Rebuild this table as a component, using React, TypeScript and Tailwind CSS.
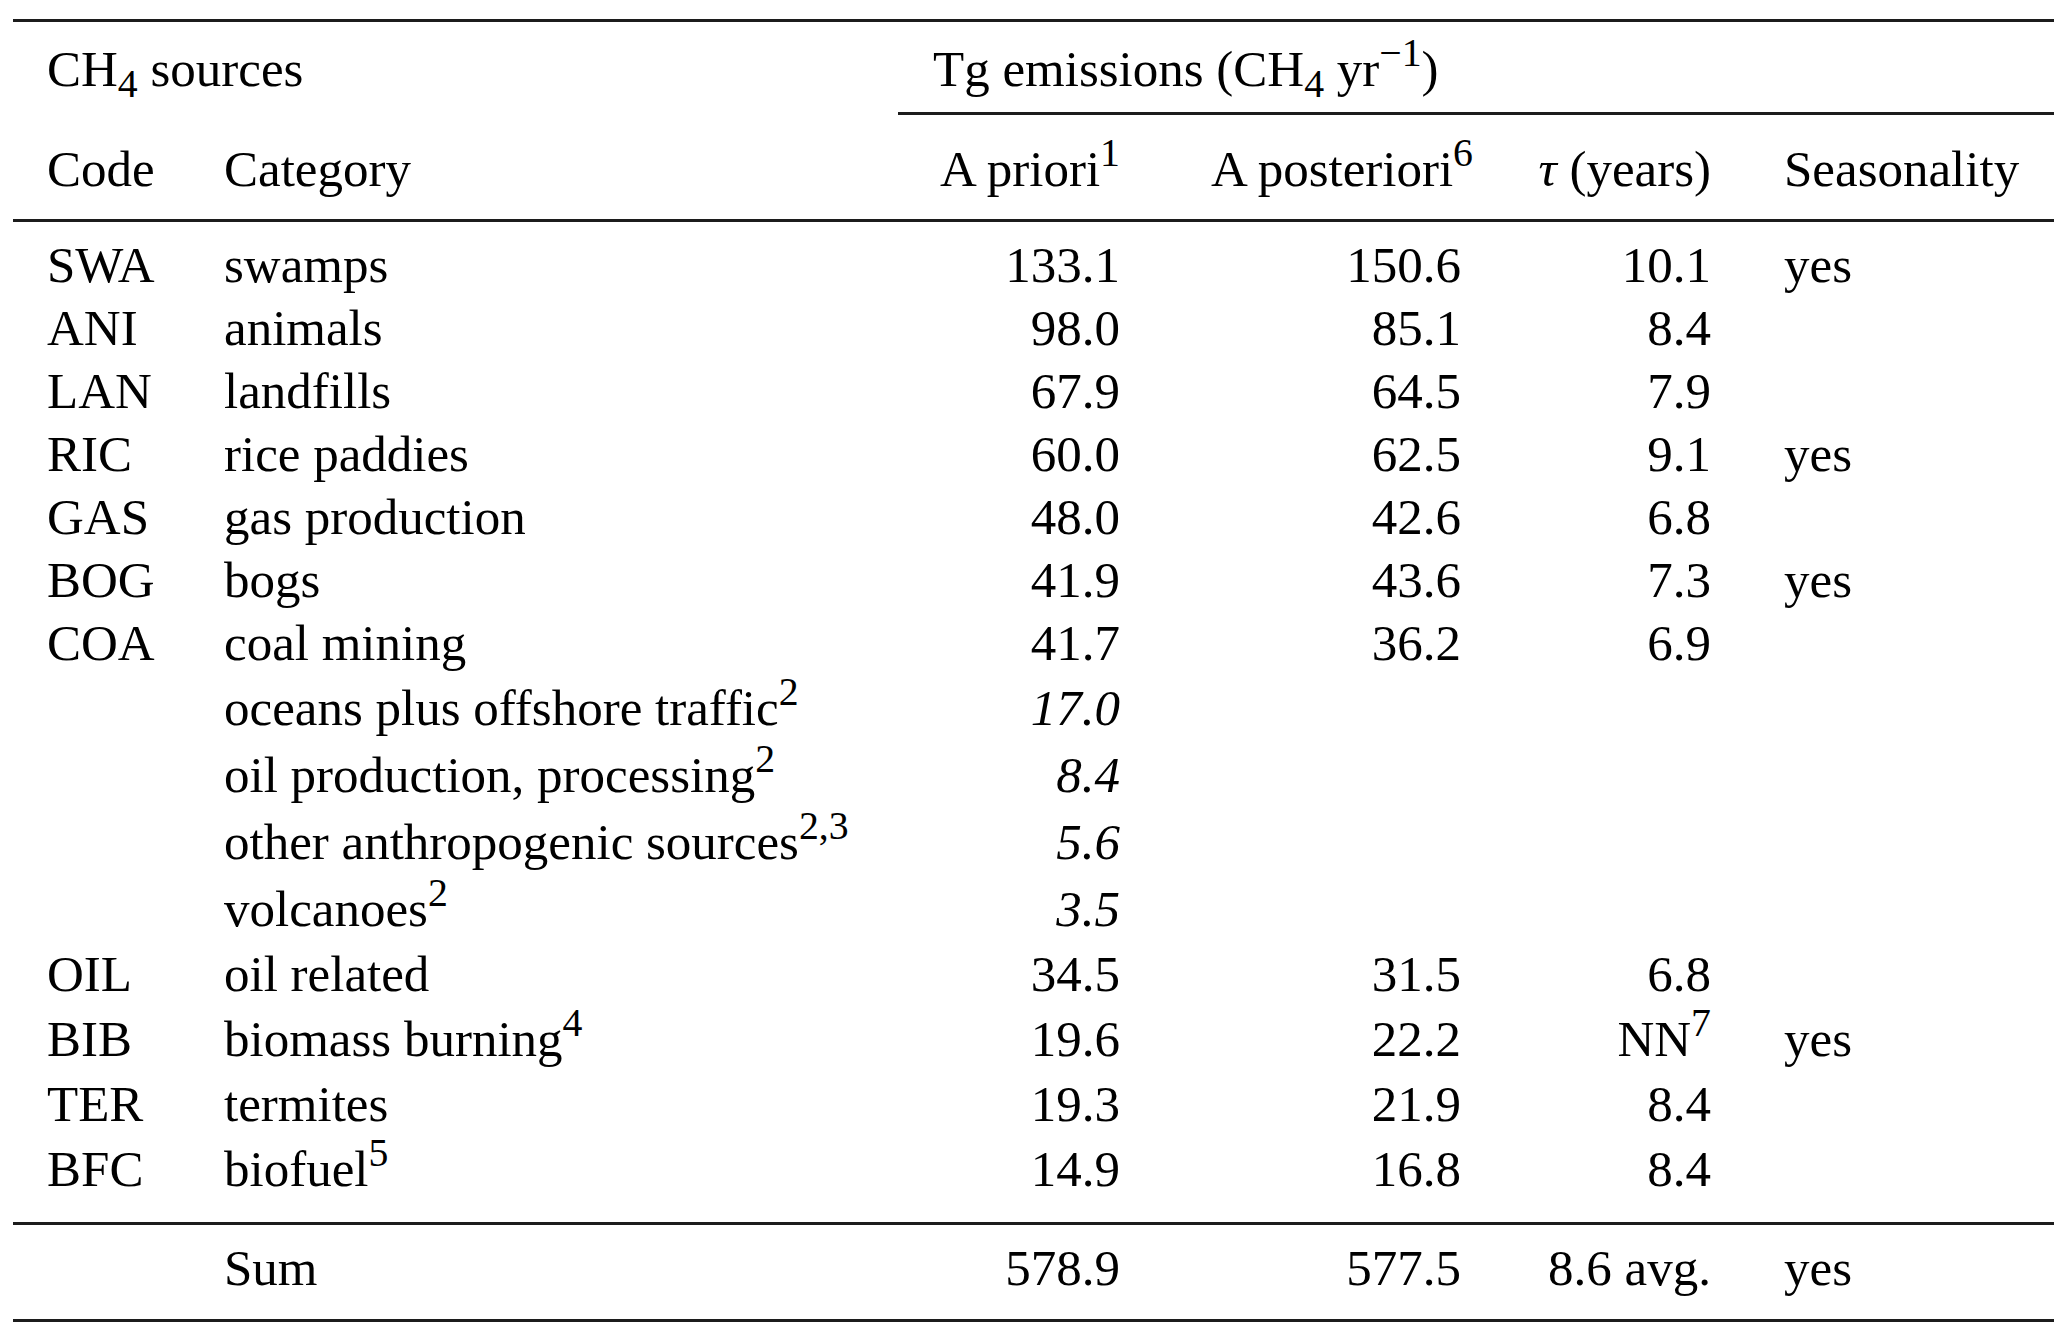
import React from 'react';

type Row = {
  code?: string;
  category: string;
  note?: string;
  prior: string;
  posterior?: string;
  tau?: string;
  tauNote?: string;
  seasonal?: boolean;
  italic?: boolean;
  h: string;
};

const rows: Row[] = [
  { code: 'SWA', category: 'swamps', prior: '133.1', posterior: '150.6', tau: '10.1', seasonal: true, h: 'h-[63px]' },
  { code: 'ANI', category: 'animals', prior: '98.0', posterior: '85.1', tau: '8.4', h: 'h-[63px]' },
  { code: 'LAN', category: 'landfills', prior: '67.9', posterior: '64.5', tau: '7.9', h: 'h-[63px]' },
  { code: 'RIC', category: 'rice paddies', prior: '60.0', posterior: '62.5', tau: '9.1', seasonal: true, h: 'h-[63px]' },
  { code: 'GAS', category: 'gas production', prior: '48.0', posterior: '42.6', tau: '6.8', h: 'h-[63px]' },
  { code: 'BOG', category: 'bogs', prior: '41.9', posterior: '43.6', tau: '7.3', seasonal: true, h: 'h-[63px]' },
  { code: 'COA', category: 'coal mining', prior: '41.7', posterior: '36.2', tau: '6.9', h: 'h-[63px]' },
  { category: 'oceans plus offshore traffic', note: '2', prior: '17.0', italic: true, h: 'h-[67px]' },
  { category: 'oil production, processing', note: '2', prior: '8.4', italic: true, h: 'h-[67px]' },
  { category: 'other anthropogenic sources', note: '2,3', prior: '5.6', italic: true, h: 'h-[67px]' },
  { category: 'volcanoes', note: '2', prior: '3.5', italic: true, h: 'h-[67px]' },
  { code: 'OIL', category: 'oil related', prior: '34.5', posterior: '31.5', tau: '6.8', h: 'h-[63px]' },
  { code: 'BIB', category: 'biomass burning', note: '4', prior: '19.6', posterior: '22.2', tau: 'NN', tauNote: '7', seasonal: true, h: 'h-[67px]' },
  { code: 'TER', category: 'termites', prior: '19.3', posterior: '21.9', tau: '8.4', h: 'h-[63px]' },
  { code: 'BFC', category: 'biofuel', note: '5', prior: '14.9', posterior: '16.8', tau: '8.4', h: 'h-[67px]' },
];

const grid = 'grid grid-cols-[177px_666px_230px_341px_250px_1fr] items-center pl-[34px]';

function Sup({ children }: { children: React.ReactNode }) {
  return <sup className="top-[-0.5em] text-[0.78em]">{children}</sup>;
}

function Sub({ children }: { children: React.ReactNode }) {
  return <sub className="bottom-[-0.3em] text-[0.78em]">{children}</sub>;
}

function Rule() {
  return <div className="h-[3px] bg-[#1c1c1c]" />;
}

export default function App() {
  return (
    <div className="min-h-screen bg-white text-black">
      <div
        className="ml-[13px] w-[2041px] pt-[19px] text-[51px] leading-none"
        style={{ fontFamily: '"Liberation Serif", "Times New Roman", serif' }}
      >
        <Rule />

        {/* header, first line */}
        <div className={`${grid} h-[90px] pt-[4px]`}>
          <div className="col-span-2 whitespace-nowrap">
            CH<Sub>4</Sub> sources
          </div>
          <div className="col-span-4 whitespace-nowrap pl-[43px]">
            Tg emissions (CH<Sub>4</Sub> yr<Sup>−1</Sup>)
          </div>
        </div>
        <div className="ml-[885px] h-[3px] bg-[#1c1c1c]" />

        {/* header, second line */}
        <div className={`${grid} h-[104px] pt-[4px]`}>
          <div>Code</div>
          <div>Category</div>
          <div className="text-right whitespace-nowrap">
            A priori<Sup>1</Sup>
          </div>
          <div className="-mr-[12px] text-right whitespace-nowrap">
            A posteriori<Sup>6</Sup>
          </div>
          <div className="text-right whitespace-nowrap">
            <span className="italic">τ</span> (years)
          </div>
          <div className="pl-[73px]">Seasonality</div>
        </div>
        <Rule />

        <div className="pt-[12px] pb-[19px]">
          {rows.map((r) => (
            <div key={r.category} className={`${grid} ${r.h}`}>
              <div>{r.code}</div>
              <div className="whitespace-nowrap">
                {r.category}
                {r.note && <Sup>{r.note}</Sup>}
              </div>
              <div className={r.italic ? 'text-right italic' : 'text-right'}>{r.prior}</div>
              <div className="text-right">{r.posterior}</div>
              <div className="text-right whitespace-nowrap">
                {r.tau}
                {r.tauNote && <Sup>{r.tauNote}</Sup>}
              </div>
              <div className="pl-[73px]">{r.seasonal ? 'yes' : ''}</div>
            </div>
          ))}
        </div>
        <Rule />

        <div className={`${grid} h-[94px] pb-[8px]`}>
          <div />
          <div>Sum</div>
          <div className="text-right">578.9</div>
          <div className="text-right">577.5</div>
          <div className="text-right whitespace-nowrap">8.6 avg.</div>
          <div className="pl-[73px]">yes</div>
        </div>
        <Rule />
      </div>
    </div>
  );
}
